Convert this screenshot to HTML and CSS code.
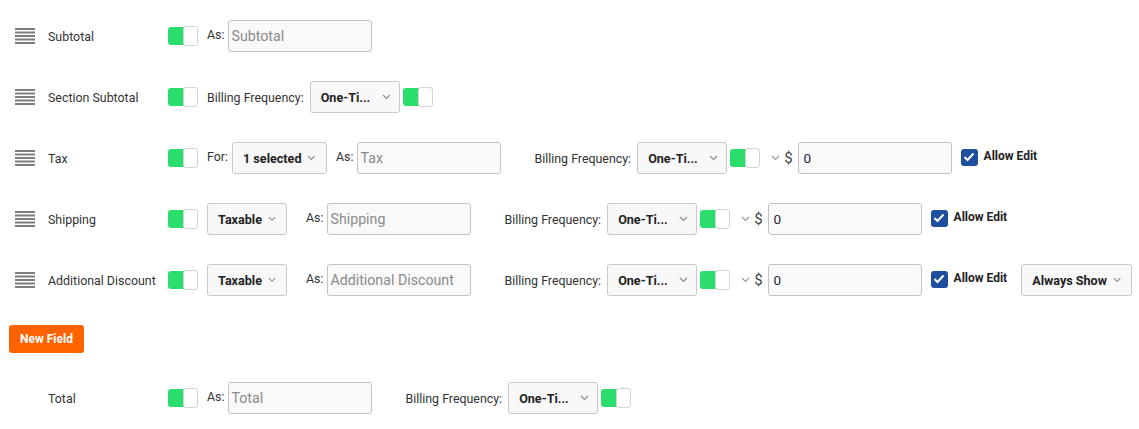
FILE: index.html
```html
<!DOCTYPE html>
<html lang="en">
<head>
    <meta charset="UTF-8">
    <title>Summary Fields</title>
    <link rel="stylesheet" href="styles.css">
</head>
<body>
    <div class="fields">
        <div class="field-row">
            <svg class="handle" width="20" height="16" viewBox="0 0 20 16"><rect y="0" width="20" height="2"/><rect y="3.5" width="20" height="2"/><rect y="7" width="20" height="2"/><rect y="10.5" width="20" height="2"/><rect y="14" width="20" height="2"/></svg>
            <span class="field-name">Subtotal</span>
            <span class="toggle"><span class="track"></span><span class="knob"></span></span>
            <span class="inline-label">As:</span>
            <input class="text-input" placeholder="Subtotal">
        </div>

        <div class="field-row">
            <svg class="handle" width="20" height="16" viewBox="0 0 20 16"><rect y="0" width="20" height="2"/><rect y="3.5" width="20" height="2"/><rect y="7" width="20" height="2"/><rect y="10.5" width="20" height="2"/><rect y="14" width="20" height="2"/></svg>
            <span class="field-name">Section Subtotal</span>
            <span class="toggle"><span class="track"></span><span class="knob"></span></span>
            <span class="plain-label">Billing Frequency:</span>
            <span class="select freq">One-Ti...<svg class="chev" width="9" height="6" viewBox="0 0 9 6"><path d="M1 1l3.5 3.5L8 1"/></svg></span>
            <span class="toggle after-select"><span class="track"></span><span class="knob"></span></span>
        </div>

        <div class="field-row">
            <svg class="handle" width="20" height="16" viewBox="0 0 20 16"><rect y="0" width="20" height="2"/><rect y="3.5" width="20" height="2"/><rect y="7" width="20" height="2"/><rect y="10.5" width="20" height="2"/><rect y="14" width="20" height="2"/></svg>
            <span class="field-name">Tax</span>
            <span class="toggle"><span class="track"></span><span class="knob"></span></span>
            <span class="inline-label">For:</span>
            <span class="select selected-count">1 selected<svg class="chev" width="9" height="6" viewBox="0 0 9 6"><path d="M1 1l3.5 3.5L8 1"/></svg></span>
            <span class="inline-label as-gap">As:</span>
            <input class="text-input" placeholder="Tax">
            <span class="plain-label billing">Billing Frequency:</span>
            <span class="select freq">One-Ti...<svg class="chev" width="9" height="6" viewBox="0 0 9 6"><path d="M1 1l3.5 3.5L8 1"/></svg></span>
            <span class="toggle after-select"><span class="track"></span><span class="knob"></span></span>
            <svg class="small-chev" width="9" height="6" viewBox="0 0 9 6"><path d="M1 1l3.5 3.5L8 1"/></svg>
            <span class="currency">$</span>
            <input class="text-input amount" value="0">
            <span class="checkbox"><svg width="12" height="10" viewBox="0 0 12 10"><path d="M1.5 5l3 3L10.5 1.5"/></svg></span>
            <span class="check-label">Allow Edit</span>
        </div>

        <div class="field-row">
            <svg class="handle" width="20" height="16" viewBox="0 0 20 16"><rect y="0" width="20" height="2"/><rect y="3.5" width="20" height="2"/><rect y="7" width="20" height="2"/><rect y="10.5" width="20" height="2"/><rect y="14" width="20" height="2"/></svg>
            <span class="field-name">Shipping</span>
            <span class="toggle"><span class="track"></span><span class="knob"></span></span>
            <span class="select taxable">Taxable<svg class="chev" width="9" height="6" viewBox="0 0 9 6"><path d="M1 1l3.5 3.5L8 1"/></svg></span>
            <span class="inline-label">As:</span>
            <input class="text-input" placeholder="Shipping">
            <span class="plain-label billing">Billing Frequency:</span>
            <span class="select freq">One-Ti...<svg class="chev" width="9" height="6" viewBox="0 0 9 6"><path d="M1 1l3.5 3.5L8 1"/></svg></span>
            <span class="toggle after-select"><span class="track"></span><span class="knob"></span></span>
            <svg class="small-chev" width="9" height="6" viewBox="0 0 9 6"><path d="M1 1l3.5 3.5L8 1"/></svg>
            <span class="currency">$</span>
            <input class="text-input amount" value="0">
            <span class="checkbox"><svg width="12" height="10" viewBox="0 0 12 10"><path d="M1.5 5l3 3L10.5 1.5"/></svg></span>
            <span class="check-label">Allow Edit</span>
        </div>

        <div class="field-row">
            <svg class="handle" width="20" height="16" viewBox="0 0 20 16"><rect y="0" width="20" height="2"/><rect y="3.5" width="20" height="2"/><rect y="7" width="20" height="2"/><rect y="10.5" width="20" height="2"/><rect y="14" width="20" height="2"/></svg>
            <span class="field-name">Additional Discount</span>
            <span class="toggle"><span class="track"></span><span class="knob"></span></span>
            <span class="select taxable">Taxable<svg class="chev" width="9" height="6" viewBox="0 0 9 6"><path d="M1 1l3.5 3.5L8 1"/></svg></span>
            <span class="inline-label">As:</span>
            <input class="text-input" placeholder="Additional Discount">
            <span class="plain-label billing">Billing Frequency:</span>
            <span class="select freq">One-Ti...<svg class="chev" width="9" height="6" viewBox="0 0 9 6"><path d="M1 1l3.5 3.5L8 1"/></svg></span>
            <span class="toggle after-select"><span class="track"></span><span class="knob"></span></span>
            <svg class="small-chev" width="9" height="6" viewBox="0 0 9 6"><path d="M1 1l3.5 3.5L8 1"/></svg>
            <span class="currency">$</span>
            <input class="text-input amount" value="0">
            <span class="checkbox"><svg width="12" height="10" viewBox="0 0 12 10"><path d="M1.5 5l3 3L10.5 1.5"/></svg></span>
            <span class="check-label">Allow Edit</span>
            <span class="select visibility">Always Show<svg class="chev" width="9" height="6" viewBox="0 0 9 6"><path d="M1 1l3.5 3.5L8 1"/></svg></span>
        </div>

        <button class="new-field">New Field</button>

        <div class="field-row">
            <span class="handle-space"></span>
            <span class="field-name">Total</span>
            <span class="toggle"><span class="track"></span><span class="knob"></span></span>
            <span class="inline-label">As:</span>
            <input class="text-input" placeholder="Total">
            <span class="plain-label billing">Billing Frequency:</span>
            <span class="select freq">One-Ti...<svg class="chev" width="9" height="6" viewBox="0 0 9 6"><path d="M1 1l3.5 3.5L8 1"/></svg></span>
            <span class="toggle after-select"><span class="track"></span><span class="knob"></span></span>
        </div>
    </div>
</body>
</html>
```

FILE: styles.css
```css
body {
    margin: 0;
    background: #ffffff;
    color: #333333;
    font-family: Roboto, 'Liberation Sans', sans-serif;
    font-size: 12.4px;
}

.fields {
    display: flex;
    flex-direction: column;
    gap: 29px;
    padding: 20px 0 0 9px;
}

.field-row {
    display: flex;
    align-items: center;
    height: 32px;
    padding-left: 6px;
}

.handle {
    fill: #7d7d7d;
    flex-shrink: 0;
}

.handle-space {
    width: 20px;
}

.field-name {
    width: 120px;
    margin-left: 13px;
    white-space: nowrap;
}

/* toggle switch */
.toggle {
    display: flex;
    align-items: center;
    width: 30px;
    height: 20px;
    margin-right: 9px;
    flex-shrink: 0;
}

.toggle .track {
    width: 16px;
    height: 18px;
    background: #2bdd6b;
    border-radius: 3px 0 0 3px;
}

.toggle .knob {
    width: 15px;
    height: 20px;
    margin-left: -1px;
    background: #ffffff;
    border: 1px solid #d4d4d4;
    border-radius: 3px;
    box-sizing: border-box;
}

.toggle.after-select {
    margin-left: 3px;
    margin-right: 0;
}

.inline-label {
    margin-bottom: 4px;
    margin-right: 4px;
}

.inline-label.as-gap {
    margin-left: 9px;
}

.plain-label {
    white-space: nowrap;
    margin-right: 6px;
}

.plain-label.billing {
    margin-left: 33px;
}

.text-input {
    width: 144px;
    height: 32px;
    box-sizing: border-box;
    border: 1px solid #c3c3c3;
    border-radius: 3px;
    background: #f9f9f9;
    padding: 0 2px;
    font-family: Roboto, 'Liberation Sans', sans-serif;
    font-size: 14.2px;
    color: #1c2540;
    outline: none;
}

.text-input::placeholder {
    color: #8a8a8a;
}

.text-input.amount {
    width: 154px;
    font-size: 13.5px;
    margin-left: 5px;
    padding-left: 5px;
}

.select {
    display: flex;
    align-items: center;
    justify-content: space-between;
    height: 32px;
    box-sizing: border-box;
    border: 1px solid #c8c8c8;
    border-radius: 3px;
    background: #f8f8f8;
    padding: 0 10px;
    font-size: 12.6px;
    font-weight: bold;
    color: #222222;
    white-space: nowrap;
    flex-shrink: 0;
}

.select.freq {
    width: 90px;
    padding-right: 8px;
}

.select.selected-count {
    width: 95px;
}

.select.taxable {
    width: 80px;
    margin-right: 19px;
}

.select.visibility {
    width: 111px;
    margin-left: 14px;
}

.chev {
    fill: none;
    stroke: #8d8d8d;
    stroke-width: 1.2;
    margin-left: 6px;
}

.small-chev {
    fill: none;
    stroke: #9a9a9a;
    stroke-width: 1.2;
    margin-left: 11px;
}

.currency {
    font-size: 15px;
    color: #444444;
    margin-left: 4px;
}

.checkbox {
    display: flex;
    align-items: center;
    justify-content: center;
    width: 17px;
    height: 17px;
    margin-left: 9px;
    margin-bottom: 2px;
    background: #1d4f9c;
    border-radius: 3px;
    flex-shrink: 0;
}

.checkbox svg {
    fill: none;
    stroke: #ffffff;
    stroke-width: 2;
}

.check-label {
    font-size: 12px;
    font-weight: bold;
    color: #222222;
    margin-left: 6px;
    margin-bottom: 4px;
}

.new-field {
    align-self: flex-start;
    width: 75px;
    height: 28px;
    border: none;
    border-radius: 3px;
    background: #ff6200;
    color: #ffffff;
    font-family: Roboto, 'Liberation Sans', sans-serif;
    font-size: 12px;
    font-weight: bold;
    padding: 0;
}
```
